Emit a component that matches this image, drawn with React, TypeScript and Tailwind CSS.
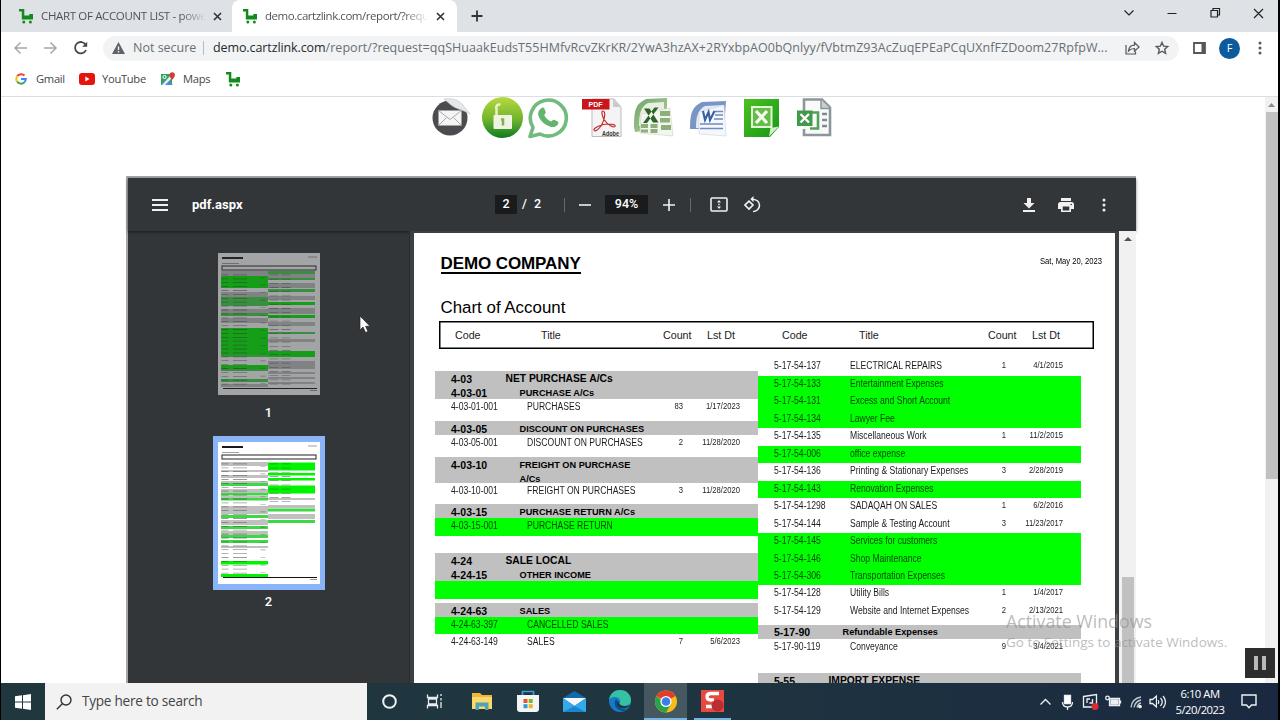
import type { ReactNode } from 'react'

type Kind = 'head1' | 'head2' | 'account' | 'green' | 'gap'

type Entry = {
  kind: Kind
  h: string
  code?: string
  title?: string
  count?: string
  date?: string
}

const leftEntries: Entry[] = [
  { kind: 'gap', h: 'h-[13px]' },
  { kind: 'head1', h: 'h-[14px]', code: '4-03', title: 'NET PURCHASE A/Cs' },
  { kind: 'head2', h: 'h-[14px]', code: '4-03-01', title: 'PURCHASE A/Cs' },
  { kind: 'account', h: 'h-[17px]', code: '4-03-01-001', title: 'PURCHASES', count: '83', date: '1/17/2023' },
  { kind: 'gap', h: 'h-[5px]' },
  { kind: 'head2', h: 'h-[14px]', code: '4-03-05', title: 'DISCOUNT ON PURCHASES' },
  { kind: 'account', h: 'h-[17px]', code: '4-03-05-001', title: 'DISCOUNT ON PURCHASES', count: '2', date: '11/28/2020' },
  { kind: 'gap', h: 'h-[5px]' },
  { kind: 'head2', h: 'h-[26px]', code: '4-03-10', title: 'FREIGHT ON PURCHASE\nA/Cs' },
  { kind: 'account', h: 'h-[17px]', code: '4-03-10-001', title: 'FREIGHT ON PURCHASES', count: '3', date: '11/28/2020' },
  { kind: 'gap', h: 'h-[4px]' },
  { kind: 'head2', h: 'h-[14px]', code: '4-03-15', title: 'PURCHASE RETURN A/Cs' },
  { kind: 'green', h: 'h-[18px]', code: '4-03-15-001', title: 'PURCHASE RETURN' },
  { kind: 'gap', h: 'h-[17px]' },
  { kind: 'head1', h: 'h-[14px]', code: '4-24', title: 'SALE LOCAL' },
  { kind: 'head2', h: 'h-[14px]', code: '4-24-15', title: 'OTHER INCOME' },
  { kind: 'green', h: 'h-[18px]' },
  { kind: 'gap', h: 'h-[4px]' },
  { kind: 'head2', h: 'h-[14px]', code: '4-24-63', title: 'SALES' },
  { kind: 'green', h: 'h-[17px]', code: '4-24-63-397', title: 'CANCELLED SALES' },
  { kind: 'account', h: 'h-[17px]', code: '4-24-63-149', title: 'SALES', count: '7', date: '5/6/2023' },
]

const line = 'h-[17.46px]'

const rightEntries: Entry[] = [
  { kind: 'account', h: 'h-[18px]', code: '5-17-54-137', title: 'ELECTRICAL REPAIRS', count: '1', date: '4/1/2015' },
  { kind: 'green', h: line, code: '5-17-54-133', title: 'Entertainment Expenses' },
  { kind: 'green', h: line, code: '5-17-54-131', title: 'Excess and Short Account' },
  { kind: 'green', h: line, code: '5-17-54-134', title: 'Lawyer Fee' },
  { kind: 'account', h: line, code: '5-17-54-135', title: 'Miscellaneous Work', count: '1', date: '11/2/2015' },
  { kind: 'green', h: line, code: '5-17-54-006', title: 'office expense' },
  { kind: 'account', h: line, code: '5-17-54-136', title: 'Printing & Stationary Expenses', count: '3', date: '2/28/2019' },
  { kind: 'green', h: line, code: '5-17-54-143', title: 'Renovation Expenses' },
  { kind: 'account', h: line, code: '5-17-54-1298', title: 'SADAQAH ON SALES', count: '1', date: '6/2/2016' },
  { kind: 'account', h: line, code: '5-17-54-144', title: 'Sample & Testing Account', count: '3', date: '11/23/2017' },
  { kind: 'green', h: line, code: '5-17-54-145', title: 'Services for customers' },
  { kind: 'green', h: line, code: '5-17-54-146', title: 'Shop Maintenance' },
  { kind: 'green', h: line, code: '5-17-54-306', title: 'Transportation Expenses' },
  { kind: 'account', h: line, code: '5-17-54-128', title: 'Utility Bills', count: '1', date: '1/4/2017' },
  { kind: 'account', h: line, code: '5-17-54-129', title: 'Website and Internet Expenses', count: '2', date: '2/13/2021' },
  { kind: 'gap', h: 'h-[4.5px]' },
  { kind: 'head2', h: 'h-[14px]', code: '5-17-90', title: 'Refundable Expenses' },
  { kind: 'account', h: 'h-[17px]', code: '5-17-90-119', title: 'Conveyance', count: '9', date: '3/4/2021' },
  { kind: 'gap', h: 'h-[17.5px]' },
  { kind: 'head1', h: 'h-[14px]', code: '5-55', title: 'IMPORT EXPENSE' },
]

function Row({ e }: { e: Entry }) {
  if (e.kind === 'gap') return <div className={`shrink-0 ${e.h}`} />
  if (e.kind === 'head1' || e.kind === 'head2') {
    const first = e.kind === 'head1'
    return (
      <div className={`flex shrink-0 bg-[#c0c0c0] pl-4 pt-[0.5px] font-bold leading-[14px] text-black ${e.h}`}>
        <span className={`text-[10.5px] ${first ? 'w-[54.5px]' : 'w-[68.5px]'}`}>{e.code}</span>
        <span className={`whitespace-pre ${first ? 'text-[10.3px]' : 'text-[9.2px]'}`}>{e.title}</span>
      </div>
    )
  }
  const green = e.kind === 'green'
  return (
    <div
      className={`grid shrink-0 grid-cols-[75.5px_116.5px_40px_57px] whitespace-nowrap pl-4 leading-[16px] ${e.h} ${
        green ? 'bg-[#00ff00] text-[#054505]' : 'text-[#1c1c1c]'
      }`}
    >
      <span className="origin-left scale-x-[0.86] text-[10px]">{e.code}</span>
      <span className="origin-left scale-x-[0.858] text-[10px]">{e.title}</span>
      <span className="-mt-px origin-right scale-x-[0.85] text-right text-[9px]">{e.count}</span>
      <span className="-mt-px origin-right scale-x-[0.85] text-right text-[9px]">{e.date}</span>
    </div>
  )
}

function Cart({ className = '' }: { className?: string }) {
  return (
    <svg className={className} width="15" height="16" viewBox="0 0 15 16">
      <path d="M0 1h5.300v6.500h5V6H14v5.400H2.800V3.500H0z" fill="#138a1c" />
      <circle cx="4.800" cy="14" r="1.500" fill="#138a1c" />
      <circle cx="11.400" cy="14" r="1.500" fill="#138a1c" />
    </svg>
  )
}

function Close() {
  return (
    <svg width="9" height="9" viewBox="0 0 9 9" stroke="#333" strokeWidth="1.6">
      <path d="M1 1l7 7M8 1L1 8" />
    </svg>
  )
}

function TabStrip() {
  return (
    <div className="flex h-8 bg-[#dee2e6] text-[11.5px] text-[#4a4d51]">
      <div className="flex w-[231px] items-center pl-[18px]">
        <Cart />
        <span className="ml-[7px] w-[165px] overflow-hidden whitespace-nowrap bg-gradient-to-r from-[#4a4d51] from-85% to-transparent bg-clip-text tracking-[-0.35px] text-transparent">
          CHART OF ACCOUNT LIST - powered
        </span>
        <span className="ml-[7px]"><Close /></span>
      </div>
      <div className="flex w-[225px] items-center rounded-t-lg bg-white pl-[11px]">
        <Cart />
        <span className="ml-[7px] w-[163px] overflow-hidden whitespace-nowrap bg-gradient-to-r from-[#4a4d51] from-85% to-transparent bg-clip-text tracking-[-0.45px] text-transparent">
          demo.cartzlink.com/report/?request
        </span>
        <span className="ml-[8px]"><Close /></span>
      </div>
      <svg className="ml-[14px] mt-[10px]" width="12" height="12" stroke="#333" strokeWidth="1.8">
        <path d="M6 0.5v11M.5 6h11" />
      </svg>
      <div className="ml-auto flex items-start pt-[6px]">
        <svg width="158" height="14" viewBox="1120 6 158 14" fill="none" stroke="#222" strokeWidth="1.2">
          <path d="M1124.500 10.500l4.500 4.500 4.500-4.500M1167.500 13.500h9M1211 10.500h6.500v6.500H1211zM1213 10.500v-2h6.500v6.500h-2M1254 9l9 9M1263 9l-9 9" />
        </svg>
      </div>
    </div>
  )
}

function AddressBar() {
  return (
    <div className="flex h-8 items-center bg-white text-[12.5px]">
      <svg className="ml-[13px]" width="78" height="16" viewBox="14 0 78 16" fill="none" strokeWidth="1.5">
        <path d="M27 8H15M20.500 2.500L15 8l5.500 5.500M44 8h12M50.500 2.500L56 8l-5.500 5.500" stroke="#a5a8ab" />
        <path d="M85.800 5A5.700 5.700 0 1 0 86 10" stroke="#44474a" strokeWidth="1.8" />
        <path d="M87.200 1.800v5h-5z" fill="#44474a" />
      </svg>
      <div className="ml-[11px] flex h-[25px] w-[1076px] items-center rounded-full bg-[#f1f3f4] pl-[9px] text-[#6b6e72]">
        <svg width="13" height="12" viewBox="0 0 13 12">
          <path d="M6.500 0L13 12H0z" fill="#5f6368" />
          <path d="M6.500 4.500v3.500M6.500 9v1.400" stroke="#f1f3f4" strokeWidth="1.400" />
        </svg>
        <span className="ml-[8px] w-[63px] whitespace-nowrap">Not secure</span>
        <span className="ml-[7px] h-[14px] w-px bg-[#b8bbbe]" />
        <span className="ml-[9px] w-[897px] whitespace-nowrap tracking-[0.05px]">
          <span className="tracking-[-0.1px] text-[#26292c]">demo.cartzlink.com</span>
          /report/?request=qqSHuaakEudsT55HMfvRcvZKrKR/2YwA3hzAX+2RYxbpAO0bQnlyy/fVbtmZ93AcZuqEPEaPCqUXnfFZDoom27RpfpW...
        </span>
        <svg className="ml-[14px]" width="46" height="16" viewBox="1124 0 46 16" fill="none" stroke="#55585c" strokeWidth="1.200">
          <path d="M1126 5v9h9.500v-2.500M1128.500 11c.5-4 3-5.800 6-5.800V2.500l4.500 4.500-4.500 4.200V8.500c-2.600 0-4.500.8-6 2.500z" />
          <path d="M1162 2.500l1.700 3.700 4 .4-3 2.700.9 4-3.600-2.100-3.600 2.100.9-4-3-2.700 4-.4z" strokeWidth="1.400" />
        </svg>
      </div>
      <svg className="ml-[14px]" width="13" height="12">
        <path d="M1 1h11v10H1z" fill="none" stroke="#55585c" strokeWidth="1.800" />
        <path d="M8.500 1H12v10H8.500z" fill="#55585c" />
      </svg>
      <div className="ml-[13px] flex size-[21px] items-center justify-center rounded-full bg-[#0d5a9e] text-[11px] text-white">F</div>
      <svg className="ml-[18px]" width="4" height="14" fill="#55585c">
        <circle cx="2" cy="2" r="1.500" /><circle cx="2" cy="7" r="1.500" /><circle cx="2" cy="12" r="1.500" />
      </svg>
    </div>
  )
}

function Bookmarks() {
  return (
    <div className="flex h-[33px] items-center border-b border-[#dcdfe1] bg-white pb-[2px] text-[11.2px] tracking-[-0.3px] text-[#44474a]">
      <svg className="ml-[14px]" width="12" height="12" viewBox="0 0 12 12" fill="none" strokeWidth="2">
        <path d="M2.200 3.200A4.800 4.800 0 0 1 9.500 2.500" stroke="#ea4335" />
        <path d="M2 3.500a4.900 4.900 0 0 0 0 5" stroke="#fbbc05" />
        <path d="M2.200 8.700A4.800 4.800 0 0 0 9.200 9.500" stroke="#34a853" />
        <path d="M6 6h4.800a5 5 0 0 1-1.700 3.600" stroke="#4285f4" />
      </svg>
      <span className="ml-[9px] w-[30px]">Gmail</span>
      <svg className="ml-[13px]" width="16" height="12">
        <rect width="16" height="12" rx="3" fill="#e8140c" /><path d="M6.300 3.500v5L10.500 6z" fill="#fff" />
      </svg>
      <span className="ml-[7px] w-[44px]">YouTube</span>
      <svg className="ml-[15px]" width="14" height="14" viewBox="0 0 14 14">
        <path d="M0 2h11v11H0z" fill="#34a067" />
        <path d="M0 13L6 7l6 6z" fill="#4d87e8" /><path d="M1 13L9 4l2 2-7 7z" fill="#e9edf0" />
        <path d="M11 8C9 5 8.500 4.500 8.500 3a2.700 2.700 0 0 1 5.400 0C13.900 4.500 13 5.500 11 8z" fill="#d93a2f" />
        <circle cx="3.500" cy="5" r="1.600" fill="none" stroke="#fff" />
      </svg>
      <span className="ml-[8px] w-[29px]">Maps</span>
      <Cart className="ml-[14px]" />
    </div>
  )
}

function ExportIcons() {
  return (
    <svg className="ml-[430px]" width="404" height="44" viewBox="430 96 404 44">
      <defs>
        <linearGradient id="lime" x1="0" y1="0" x2="0" y2="1"><stop stopColor="#b9d83f" /><stop offset=".55" stopColor="#6fb52c" /><stop offset="1" stopColor="#0d7a24" /></linearGradient>
        <linearGradient id="leaf" x1="0" y1="0" x2="1" y2="1"><stop stopColor="#4cc21f" /><stop offset="1" stopColor="#16961a" /></linearGradient>
        <linearGradient id="olive" x1="0" y1="0" x2="1" y2="1"><stop stopColor="#6fa56a" /><stop offset="1" stopColor="#b5d3a2" /></linearGradient>
      </defs>
      {/* mail */}
      <circle cx="450" cy="118" r="17.500" fill="#4b4c4f" />
      <path d="M444 99c9-1 15 1 19 6l7 9c-9-5-14-5-19-9z" fill="#e6e7e9" stroke="#c4c5c8" strokeWidth=".6" />
      <path d="M438.500 110.500h23v15h-23z" fill="#f5f5f6" />
      <path d="M438.500 110.500l11.500 9 11.500-9M438.500 125.500l8-8M461.500 125.500l-8-8" fill="none" stroke="#aaa" />
      {/* unlock */}
      <circle cx="502.500" cy="117.500" r="20.500" fill="url(#lime)" />
      <path d="M496.500 116v-7c-1-3 1-5 4-4.500" fill="none" stroke="#e9f3c9" strokeWidth="2.500" />
      <rect x="493.500" y="115" width="18.500" height="14" rx="1" fill="#eef3e4" />
      <path d="M501 119.500h2v6" fill="none" stroke="#84ad55" strokeWidth="2.500" />
      {/* whatsapp */}
      <path d="M530 136.500l3-9A18 18 0 1 1 540 134z" fill="#fff" stroke="#71bb7c" strokeWidth="3.600" strokeLinejoin="round" />
      <path d="M541 108.500c1.500-1.500 3-1 3.500.5l1.200 3c.4 1-.8 2-1.500 3 1.500 3.200 4 5.300 7 6.500 1-.8 1.800-2.200 3-1.700l3.500 1.700c1.200.6.7 2.500-.5 3.800-3 3-7.500 1.800-11.500-.8-4-2.700-8-7.500-7.500-11.500.1-2 1.300-3.200 2.800-4.500z" fill="#62b56f" />
      {/* pdf */}
      <path d="M592 99h22l7 8v29.500h-29z" fill="#f4f4f4" stroke="#bbb" />
      <path d="M613 99v8h8z" fill="#c9cacc" />
      <rect x="582" y="99" width="27.500" height="10.500" fill="#c9161d" />
      <text x="588.500" y="107.300" fontSize="8" fontWeight="700" fill="#fff" fontFamily="Liberation Sans" textLength="14" lengthAdjust="spacingAndGlyphs">PDF</text>
      <path d="M603 111c3 0 2 9-2 15-3 4-6 6-7 4s8-6 14-6c5 0 8 1 7 2.500s-7-1-11-7c-2-4-3-8.500-1-8.500z" fill="none" stroke="#c32d31" strokeWidth="1.200" />
      <text x="602" y="135.500" fontSize="8" fontWeight="700" fill="#333" fontFamily="Liberation Sans" textLength="17" lengthAdjust="spacingAndGlyphs">Adobe</text>
      {/* spreadsheet */}
      <path d="M634 127c0-18 2-23 12-28l21-1v30l-32 4z" fill="url(#olive)" />
      <path d="M639 126c0-13 2-19 9-23l16-1v25z" fill="#e8efe1" />
      <path d="M641 114l29-6 3 28-33-3z" fill="#f3f5ef" stroke="#cdd4c5" strokeWidth=".6" />
      <path d="M660 111h10v5h-10zM660 118h10v4.500h-10zM641 124h7v4h-7zM650.500 124h7v4h-7zM661 125h10v5h-10zM641 129.500h7v3h-7zM650.500 129h7v4h-7z" fill="#8db07b" />
      <path d="M644 108.500h5.500l9 14H653zM658.500 107.500h-4l-11.500 15.500h4z" fill="#2d6427" />
      {/* document */}
      <path d="M690 129c0-16 2-22 12-27l24-1-2 28z" fill="#7895c6" />
      <path d="M696 128c0-12 2-18 9-22l19-1v24z" fill="#e4eaf3" />
      <path d="M699 112l25-7 2 31-27-2z" fill="#f5f7fa" stroke="#ccd3df" strokeWidth=".6" />
      <path d="M715 111.500h8M715 115h8M714 119h9M700 124h23M700 128.500h23" stroke="#6c8cc4" strokeWidth="1.700" />
      <path d="M703 111l2 9 3.500-8 1.500 8 4.500-9" fill="none" stroke="#365f9f" strokeWidth="2.100" />
      {/* green sheet */}
      <path d="M744 99h35v28l-9 10h-26z" fill="url(#leaf)" />
      <path d="M769 136.500l1.500-8.500 8.500-1.500z" fill="#d8ecc9" />
      <path d="M752 107h19.500v20H752z" fill="#65bd49" stroke="#e2f5d8" strokeWidth="2" />
      <path d="M756 111l11 12M767 111l-11 12" stroke="#f3fcef" strokeWidth="3.200" />
      {/* outlined sheet */}
      <path d="M804 111v-11.500h18l8 8V135h-26v-6" fill="#fafafa" stroke="#8c979b" strokeWidth="2.600" />
      <path d="M821 99.500v9h9" fill="#c9cfd1" stroke="#8c979b" strokeWidth="1.500" />
      <path d="M822 114h5M822 120h5M822 126h5" stroke="#7f8c91" strokeWidth="2.600" />
      <path d="M812 112.500h6v16h-8" fill="none" stroke="#51a259" strokeWidth="2.600" />
      <rect x="797" y="110.500" width="15.500" height="15.500" fill="#3f9a49" />
      <path d="M800.500 114l8.500 8.500M809 114l-8.500 8.500" stroke="#fff" strokeWidth="2.400" />
    </svg>
  )
}

function PdfToolbar() {
  return (
    <div className="flex h-[53px] items-center bg-[#323639] text-[12.500px] font-medium text-white shadow-[0_1px_3px_rgba(0,0,0,0.5)]">
      <svg className="ml-[24px]" width="16" height="12" stroke="#f1f1f1" strokeWidth="1.800">
        <path d="M0 1h16M0 6h16M0 11h16" />
      </svg>
      <span className="ml-[24px] w-[303px] font-[Roboto] text-[13px] font-bold">pdf.aspx</span>
      <span className="flex h-[19px] w-[22px] items-center justify-center bg-[#191b1c] font-[Roboto]">2</span>
      <span className="ml-[5px] w-[42px] whitespace-pre font-[Roboto] tracking-[0.3px]">/  2</span>
      <span className="h-[14px] w-px bg-[#666a6d]" />
      <svg className="ml-[14px]" width="12" height="12" stroke="#f1f1f1" strokeWidth="1.600"><path d="M0 6h12" /></svg>
      <span className="ml-[14px] flex h-[19px] w-[43px] items-center justify-center bg-[#191b1c] font-[Roboto]">94%</span>
      <svg className="ml-[15px]" width="12" height="12" stroke="#f1f1f1" strokeWidth="1.600"><path d="M0 6h12M6 0v12" /></svg>
      <span className="ml-[15px] h-[14px] w-px bg-[#666a6d]" />
      <svg className="ml-[19px]" width="18" height="15" viewBox="0 0 18 15">
        <rect x="1" y="1" width="16" height="13" rx="1" fill="none" stroke="#f1f1f1" strokeWidth="1.600" />
        <path d="M9 3l2 2.500H7zM9 12l2-2.500H7zM8.300 6.800h1.400v1.400H8.300z" fill="#f1f1f1" />
      </svg>
      <svg className="ml-[16px]" width="17" height="17" viewBox="0 0 17 17" fill="none" stroke="#f1f1f1" strokeWidth="1.600">
        <path d="M5 5.200L9 9l-4 4-4-4z" />
        <path d="M7.500 3.200c5 0 8 2.500 8 6 0 3.800-3 6.300-6.500 6.300" />
        <path d="M9.500 0v6.200L6.300 3.100z" fill="#f1f1f1" stroke="none" />
      </svg>
      <svg className="ml-auto" width="12" height="14" fill="#f1f1f1"><path d="M4 0h4v5h3.500L6 10.500.5 5H4zM0 12h12v2H0z" /></svg>
      <svg className="ml-[23px]" width="16" height="14" viewBox="0 0 16 14" fill="#f1f1f1">
        <path d="M3 0h10v3H3zM2.500 4h11A2.500 2.500 0 0 1 16 6.500V11h-3v3H3v-3H0V6.500A2.500 2.500 0 0 1 2.500 4z" />
        <path d="M4.700 8.500h6.600v4H4.700z" fill="#323639" /><circle cx="13.200" cy="6.500" r=".8" fill="#323639" />
      </svg>
      <svg className="ml-[28px] mr-[30px]" width="4" height="14" fill="#f1f1f1">
        <circle cx="2" cy="2" r="1.500" /><circle cx="2" cy="7" r="1.500" /><circle cx="2" cy="12" r="1.500" />
      </svg>
    </div>
  )
}

// y, height, tone (g = grey, n = bright green, s = soft green)
type Bar = [number, number, 'g' | 'n' | 's']
const fills = { g: '#c0c0c0', n: '#00f400', s: '#3fd845' }

const firstPage: { left: Bar[]; right: Bar[] } = {
  left: [[18, 5, 'g'], [23, 12, 'n'], [39, 5, 'g'], [44, 9, 's'], [56, 4, 'g'], [60, 3, 's'], [65, 5, 'g'], [75, 16, 'n'], [91, 11, 'n'], [102, 2, 's'], [112, 4, 'n'], [116, 2, 's'], [126, 3, 's'], [131, 3, 'g']],
  right: [[18, 3, 's'], [21, 4, 'g'], [25, 2, 's'], [30, 5, 'g'], [36, 3, 's'], [43, 4, 'g'], [49, 3, 'n'], [55, 6, 'g'], [62, 3, 'n'], [69, 4, 'g'], [79, 2, 's'], [86, 3, 'g'], [98, 6, 'n'], [108, 8, 'g'], [119, 2, 'g'], [124, 2, 'g'], [129, 2, 'g']],
}
const secondPage: { left: Bar[]; right: Bar[] } = {
  left: [[20, 4, 'g'], [28, 2, 'g'], [33, 3, 'g'], [39, 2, 'g'], [41, 3, 's'], [47, 4, 'g'], [51, 2.500, 's'], [54, 2, 'g'], [56, 2.500, 's'], [64, 8, 'g'], [73, 3, 's'], [78, 5, 'g'], [84, 3, 's'], [89, 4, 'g'], [93, 3, 's'], [98, 3, 's'], [104, 2, 'g'], [119, 3.500, 'n'], [132, 3, 'n']],
  right: [[20.500, 8, 'n'], [31, 2.500, 'n'], [36, 2.500, 'n'], [43.500, 8, 'n'], [56, 2, 'g'], [63, 3, 'g'], [66.500, 3, 's'], [72, 5, 'g'], [78, 3, 's']],
}

function Thumbnail({ page }: { page: typeof firstPage }) {
  const rightEnd = page === secondPage ? 60 : 132
  return (
    <svg className="block" width="102" height="142" viewBox="0 0 102 142">
      <rect width="102" height="142" fill="#fff" />
      <path d="M4 5h21" stroke="#000" strokeWidth="1.800" />
      <path d="M4 10.500h17M90 4h9" stroke="#888" strokeWidth=".8" />
      {page.left.map(([y, h, tone], i) => <rect key={i} x="3" y={y} width="47" height={h} fill={fills[tone]} />)}
      {page.right.map(([y, h, tone], i) => <rect key={i} x="50" y={y} width="47" height={h} fill={fills[tone]} />)}
      <rect x="4" y="13" width="94" height="4" fill="#fff" stroke="#222" strokeWidth="1" />
      <path d="M7 21.500v112" stroke="#222" strokeWidth="7" strokeDasharray=".8 3.100" opacity=".45" />
      <path d="M22 21.500v112" stroke="#222" strokeWidth="14" strokeDasharray=".8 3.100" opacity=".45" />
      <path d={`M56 21.500V${rightEnd}M68 21.500V${rightEnd}`} stroke="#222" strokeWidth="9" strokeDasharray=".8 3.400" opacity=".4" />
      <path d="M45 24v108" stroke="#333" strokeWidth="5" strokeDasharray=".6 7" opacity=".5" />
      <path d="M5 135.500h94" stroke="#111" strokeWidth="1.200" />
      <path d="M92 137.500h7" stroke="#777" strokeWidth=".8" />
    </svg>
  )
}

function HeaderCell({ className, children }: { className: string; children: ReactNode }) {
  return <span className={`shrink-0 whitespace-nowrap ${className}`}>{children}</span>
}

function Report() {
  return (
    <div className="flex h-[450px] w-[701px] flex-col overflow-hidden bg-white font-['Liberation_Sans',sans-serif] text-black">
      <div className="flex justify-between pl-[26.500px] pr-[13px] pt-[21px]">
        <h1 className="w-[140px] whitespace-nowrap border-b-2 border-black pt-px text-[17px] font-bold leading-[17px] tracking-[-0.100px]">DEMO COMPANY</h1>
        <span className="mt-[1px] origin-right scale-x-[0.85] text-[9px] leading-[12px]">Sat, May 20, 2023</span>
      </div>
      <h2 className="mt-[24px] pl-[26.500px] text-[16.900px] leading-[20px]">Chart of Account</h2>
      <div className="ml-[25px] mt-[3px] flex h-[28px] w-[655px] shrink-0 items-center border border-black text-[10.700px] text-[#222] shadow-[inset_0_0_0_0.5px_#000]">
        <HeaderCell className="ml-[15px] w-[86px]">Code</HeaderCell>
        <HeaderCell className="w-[122px]">Title</HeaderCell>
        <HeaderCell className="w-[44px]">Count</HeaderCell>
        <HeaderCell className="w-[75px]">Lst Dt</HeaderCell>
        <HeaderCell className="w-[77px]">Code</HeaderCell>
        <HeaderCell className="w-[129px]">Title</HeaderCell>
        <HeaderCell className="w-[44px] pt-px">Count</HeaderCell>
        <HeaderCell className="">Lst Dt</HeaderCell>
      </div>
      <div className="ml-[21px] mt-[9px] flex">
        <div className="flex w-[323px] flex-col">
          {leftEntries.map((e, i) => <Row key={i} e={e} />)}
        </div>
        <div className="flex w-[323px] flex-col">
          {rightEntries.map((e, i) => <Row key={i} e={e} />)}
        </div>
      </div>
    </div>
  )
}

function PdfViewer() {
  return (
    <div className="ml-[125px] mt-[36px] h-[507px] w-[1010px] border-l-2 border-t-2 border-[#a5a8a9] bg-[#323639]">
      <PdfToolbar />
      <div className="flex h-[452px]">
        <div className="flex w-[282px] flex-col items-center border-r border-[#292d2f] font-[Roboto] text-[13px] font-medium text-white">
          <div className="mt-[22px] opacity-55"><Thumbnail page={firstPage} /></div>
          <span className="mt-[9px] leading-[18px]">1</span>
          <div className="mt-[14px] h-[154px] w-[112px] border-x-[5px] border-y-[6px] border-[#8ab4f8]"><Thumbnail page={secondPage} /></div>
          <span className="mt-[3px] leading-[18px]">2</span>
        </div>
        <div className="flex w-[709px] bg-[#3c4043] pl-[4px] pt-[2px]">
          <Report />
        </div>
        <div className="flex flex-1 flex-col items-center bg-[#f1f1f1]">
          <svg className="mt-[6px]" width="8" height="4"><path d="M0 4l4-4 4 4z" fill="#505050" /></svg>
          <div className="mt-auto h-[106px] w-[12px] bg-[#c1c1c1]" />
        </div>
      </div>
    </div>
  )
}

function Taskbar() {
  return (
    <div className="flex h-[37px] items-center bg-gradient-to-r from-[#20373e] via-[#1f3540] to-[#1a2940] font-['Open_Sans',sans-serif] text-white">
      <svg className="ml-[14px]" width="16" height="16" fill="#fff"><path d="M0 2.300L7 1.300v6.200H0zM8 1.200L16 0v7.500H8zM0 8.500h7v6.200l-7-1zM8 8.500h8V16l-8-1.200z" /></svg>
      <div className="ml-[14px] flex h-full w-[322px] items-center bg-[#f2f2f2] text-[13.600px] text-[#444]">
        <svg className="ml-[11px]" width="16" height="16" fill="none" stroke="#333" strokeWidth="1.400"><circle cx="10" cy="6" r="5" /><path d="M6.300 9.700L.8 15.200" /></svg>
        <span className="ml-[10px] tracking-[-0.250px]">Type here to search</span>
      </div>
      <svg className="ml-[8px]" width="365" height="37" viewBox="375 683 365 37">
        <circle cx="389.500" cy="701.500" r="6.300" fill="none" stroke="#eef2f3" strokeWidth="2" />
        <path d="M427.500 694.500v3h10v-3M427.500 708.500v-3h10v3M428.500 699h8v5h-8zM441 694v2M441 698v2.500M441 702v6" fill="none" stroke="#e8edef" strokeWidth="1.300" />
        <path d="M472 693h8l2 2h10v14h-20z" fill="#e9b83d" /><path d="M472 697h20v12h-20z" fill="#ffd768" />
        <path d="M475.500 710v-7.500h13v7.500h-3.500v-3.500h-6v3.500z" fill="#4da3b8" />
        <path d="M522.500 695v-3.500h11v3.500" fill="none" stroke="#37a0d8" strokeWidth="1.700" />
        <path d="M517 695h22v14q0 3-3 3h-16q-3 0-3-3z" fill="#f4f5f5" />
        <path d="M523.500 699h4v4h-4z" fill="#e4562a" /><path d="M528.700 699h4v4h-4z" fill="#7db52b" /><path d="M523.500 704.200h4v4h-4z" fill="#2b9ad6" /><path d="M528.700 704.200h4v4h-4z" fill="#efb41e" />
        <path d="M563 698l11.500-7 11.500 7v13h-23z" fill="#1269ad" /><path d="M563 698h23l-11.500 8z" fill="#f5f9fb" /><path d="M563 698l11.500 8 11.500-8v14h-23z" fill="#35aae8" /><path d="M563 712l11.500-6 11.500 6z" fill="#1b86cf" />
        <circle cx="620" cy="701" r="11" fill="#1879c7" />
        <path d="M609 700c1-7 6-10 11-10 7 0 11 5 11 10 0 4-3 6-7 6-3 0-5-1-4-3 1-3-1-6-5-6-3 0-5 1-6 3z" fill="#35c2a2" />
        <path d="M616 699c-4 6 1 12 8 12l4-2c-5 2-11-2-9-7z" fill="#0c4d92" />
        <path d="M618 702c2 4 6 5 12 3-2 3-6 4-9 3-3-1-4-4-3-6z" fill="#20373e" />
        <path d="M644 683h43v37h-43z" fill="#46585f" /><path d="M644 718h43v2h-43zM694 718h37v2h-37z" fill="#75b5e6" />
        <circle cx="666" cy="701.500" r="11" fill="#f8bd16" />
        <path d="M666 701.500L656.500 696a11 11 0 0 1 19 0z" fill="#e33b2e" /><path d="M656.500 696a11 11 0 0 0 9.500 16.500l5.200-8.500h-5.200z" fill="#2ba24c" />
        <circle cx="666" cy="701.500" r="5.600" fill="#fff" /><circle cx="666" cy="701.500" r="4.300" fill="#3d7de8" />
        <path d="M701 690h23v22h-23z" fill="#e8493f" />
        <path d="M719 693.500h-8q-4 0-4 3.200t4 3.300h3M706 706.500h6" fill="none" stroke="#fff" strokeWidth="3.300" /><circle cx="717.500" cy="705.500" r="6" fill="#b92e32" />
      </svg>
      <svg className="ml-auto" width="118" height="24" viewBox="1040 690 118 24" fill="none" stroke="#eef1f4" strokeWidth="1.300">
        <path d="M1041.500 704.500l5-5 5 5" />
        <path d="M1065.500 695.500h6v8h-6z" fill="#fff" /><path d="M1063.500 702q0 5 5 5t5-5M1068.500 707v3" />
        <path d="M1084.500 696.500l13-2v12.500h-13z" /><path d="M1088 703v-4h3M1093.500 699v4h-3" /><circle cx="1096" cy="706.500" r="3.500" fill="#d92c35" stroke="none" />
        <path d="M1110.500 698.500h10v7h-10zM1121.500 700.500v3" /><path d="M1112 700h7v4h-7z" fill="#eef1f4" /><circle cx="1108.500" cy="698" r="1.800" fill="#1b2b40" />
        <path d="M1132 707.500q1-9 10-10.500M1135 707.500q1-6 7-7.500M1138 707.500q1-4 4-4.500" opacity=".8" /><circle cx="1141" cy="706.500" r="1.200" fill="#fff" />
        <path d="M1151 699.500h2.500l4-3.500v11l-4-3.500h-2.500z" />
      </svg>
      <svg width="9" height="14" fill="none" stroke="#eef1f4" strokeWidth="1.200"><path d="M1 5q1.500 2 0 4M3.500 3q3.500 4 0 8M6 1q5 6 0 12" /></svg>
      <div className="ml-[7px] flex w-[54px] flex-col items-center whitespace-nowrap text-[11.300px] leading-[16px] tracking-[-0.500px]">
        <span>6:10 AM</span>
        <span>5/20/2023</span>
      </div>
      <svg className="ml-[14px] mr-[21px]" width="16" height="15" fill="none" stroke="#eef1f4" strokeWidth="1.400"><path d="M1 1h14v10h-4.500L8 13.800 5.500 11H1z" /></svg>
    </div>
  )
}

export default function App() {
  return (
    <div className="relative h-[720px] w-[1280px] overflow-hidden border-l border-r-2 border-black bg-white font-['Open_Sans',sans-serif]">
      <TabStrip />
      <AddressBar />
      <Bookmarks />
      <div className="-mt-px flex h-[587px]">
        <div className="w-[1264px]">
          <div className="-ml-px h-[44px]"><ExportIcons /></div>
          <PdfViewer />
        </div>
        <div className="mt-px flex flex-1 flex-col items-center bg-[#f1f1f1]">
          <svg className="mb-[5px] mt-[6px]" width="7" height="4"><path d="M0 4l3.500-4L7 4z" fill="#8a8a8a" /></svg>
          <div className="h-[367px] w-[12px] bg-[#c1c1c1]" />
        </div>
      </div>
      <Taskbar />

      {/* mouse pointer */}
      <svg className="absolute left-[358px] top-[316px]" width="12" height="18" viewBox="0 0 12 18">
        <path d="M1 0v14l3-3 2.500 5.500 2.500-1-2.400-5.200H11z" fill="#fff" stroke="#222" strokeWidth=".7" />
      </svg>

      {/* activation notice */}
      <div className="absolute left-[1005px] top-[609px] whitespace-nowrap text-[#8e8e8e]/60">
        <p className="text-[17.800px] leading-[24px]">Activate Windows</p>
        <p className="text-[13.500px] leading-[18px]">Go to Settings to activate Windows.</p>
      </div>

      {/* recorder pause button */}
      <div className="absolute left-[1244px] top-[648px] flex h-[30px] w-[30px] items-center justify-center gap-[4px] bg-[#2d2d2d]">
        <span className="h-[14px] w-[4px] bg-[#b9b9b9]" />
        <span className="h-[14px] w-[4px] bg-[#b9b9b9]" />
      </div>
    </div>
  )
}
